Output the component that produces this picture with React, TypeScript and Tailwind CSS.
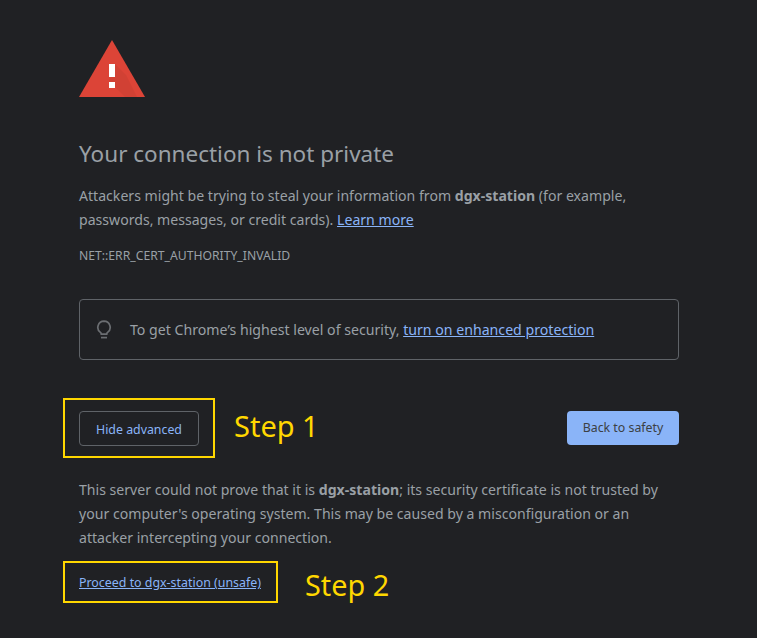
import React from "react";

function WarnIcon() {
  return (
    <svg width="66" height="57" viewBox="0 0 66 57" className="block">
      <polygon points="33,0 66,57 0,57" fill="#dc4437" />
      <polygon points="36,24 47,35 58,57 46,57 30,41" fill="#b93a2e" opacity="0.3" />
      <rect x="30" y="24" width="6" height="13" fill="#fff" />
      <rect x="30" y="42" width="6" height="6" fill="#fff" />
    </svg>
  );
}

function Bulb() {
  return (
    <svg width="16" height="20" viewBox="0 0 16 20" fill="none" stroke="#6b6e72" strokeWidth="1.7" className="block">
      <path d="M8 1.2a6.2 6.2 0 0 0-3.6 11.2c.6.5.9 1 .9 1.8h5.4c0-.8.3-1.3.9-1.8A6.2 6.2 0 0 0 8 1.2Z" />
      <path d="M5 17.6h6" />
    </svg>
  );
}

export default function App() {
  return (
    <div className="min-h-[638px] bg-[#202124] pl-[79px] pt-[40px] text-[#9aa0a6] font-['Noto_Sans','Open_Sans',sans-serif]">
      <div className="w-[600px]">
        <WarnIcon />
        <h1 className="mt-[38px] text-[22.5px] leading-[38px] font-normal">Your connection is not private</h1>
        <p className="mt-[11px] text-[14.1px] leading-[24px]">
          Attackers might be trying to steal your information from <b className="font-bold">dgx-station</b> (for example, passwords, messages, or credit cards). <a className="text-[#8ab4f8] underline">Learn more</a>
        </p>
        <p className="mt-[12px] text-[12.2px] leading-[24px]">NET::ERR_CERT_AUTHORITY_INVALID</p>
        <div className="mt-[31px] flex h-[61px] items-center rounded-[4px] border border-[#5f6368] pl-[16px] text-[14.15px]">
          <Bulb />
          <span className="ml-[18px]">
            To get Chrome’s highest level of security, <a className="text-[#8ab4f8] underline">turn on enhanced protection</a>
          </span>
        </div>
        <div className="mt-[51px] flex items-start justify-between">
          <div className="relative flex items-center">
            <button className="h-[35px] w-[120px] rounded-[4px] border border-[#5f6368] pt-[3px] text-[12.35px] text-[#8ab4f8]">Hide advanced</button>
            <div className="absolute left-[-16px] top-[-13px] h-[60px] w-[152px] border-[2px] border-[#ffd700]" />
            <span className="absolute left-[155px] top-[-10px] whitespace-nowrap text-[29px] leading-[50px] text-[#ffd700]">Step 1</span>
          </div>
          <button className="h-[34px] w-[112px] rounded-[4px] bg-[#8ab4f8] pt-[1px] text-[12.35px] text-[#3c4043]">Back to safety</button>
        </div>
        <p className="mt-[32px] text-[14.1px] leading-[24px]">
          This server could not prove that it is <b className="font-bold">dgx-station</b>; its security certificate is not trusted by your computer's operating system. This may be caused by a misconfiguration or an attacker intercepting your connection.
        </p>
        <div className="relative mt-[24px] w-fit">
          <a className="block text-[12.4px] leading-[18px] text-[#8ab4f8] underline">Proceed to dgx-station (unsafe)</a>
          <div className="absolute left-[-16px] top-[-13px] h-[42px] w-[215px] border-[2px] border-[#ffd700]" />
          <span className="absolute left-[226px] top-[-14px] whitespace-nowrap text-[28.8px] leading-[50px] text-[#ffd700]">Step 2</span>
        </div>
      </div>
    </div>
  );
}
